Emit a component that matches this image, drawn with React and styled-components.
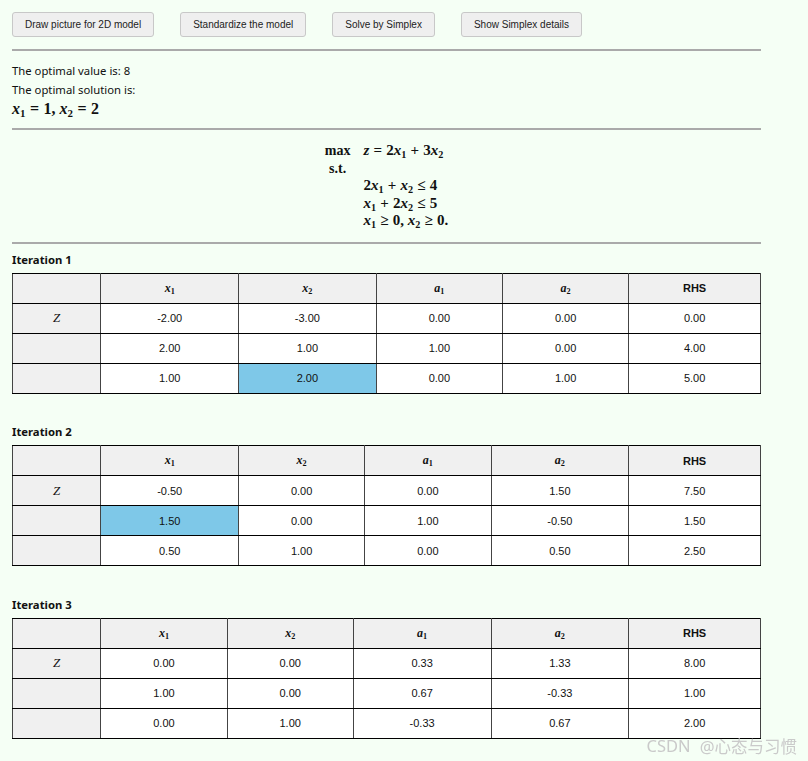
import React from 'react';
import styled, { createGlobalStyle } from 'styled-components';

const GlobalStyle = createGlobalStyle`
  html, body {
    margin: 0;
    padding: 0;
    background: #f5fff5;
  }
  body {
    font-family: "Noto Sans", "Open Sans", sans-serif;
    color: #111;
  }
`;

const Page = styled.div`
  width: 761px;
  box-sizing: border-box;
  padding: 12px 0 12px 12px;
`;

const Toolbar = styled.div`
  display: flex;
  gap: 26px;
`;

const Button = styled.button`
  height: 25px;
  padding: 0 12px;
  border: 1px solid #c8c8c8;
  border-radius: 3px;
  background: #efefef;
  color: #222;
  font-family: "Liberation Sans", Arial, sans-serif;
  font-size: 10px;
  cursor: pointer;
`;

const Rule = styled.hr`
  margin: ${(p) => p.$top ?? 11}px 0 ${(p) => p.$bottom ?? 10}px;
  border: 0;
  height: 2px;
  background: #aaaaaa;
`;

const Result = styled.div`
  font-size: 11.3px;
  line-height: 19px;
`;

const Math = styled.span`
  font-family: "Liberation Serif", "Times New Roman", serif;
  font-weight: bold;
  font-size: ${(p) => p.$size ?? 15}px;
  white-space: nowrap;
`;

const V = styled.i`
  font-style: italic;
  font-weight: bold;
`;

const Sub = styled.sub`
  font-size: 0.68em;
  line-height: 0;
  vertical-align: -0.3em;
  font-style: normal;
`;

const Op = styled.span`
  margin: 0 0.28em;
`;

const Model = styled.div`
  display: grid;
  grid-template-columns: auto auto;
  justify-content: center;
  column-gap: 13px;
  line-height: 17.5px;
`;

const ModelKey = styled.div`
  text-align: center;
  font-family: "Liberation Serif", "Times New Roman", serif;
  font-weight: bold;
  font-size: 14px;
`;

const Section = styled.section`
  margin-bottom: 31.5px;
`;

const Heading = styled.div`
  font-family: "Noto Sans", "Open Sans", sans-serif;
  font-weight: bold;
  font-size: 11.3px;
  line-height: 14px;
  margin-bottom: 6px;
`;

const Table = styled.table`
  width: 100%;
  table-layout: fixed;
  border-collapse: collapse;
  border: 1px solid #000;
  font-family: "Liberation Sans", Arial, sans-serif;
  font-size: 11px;
`;

const Cell = styled.td`
  height: 29px;
  padding: 0 8px;
  text-align: center;
  border-top: 1px solid #000;
  border-bottom: 1px solid #000;
  border-left: 1px solid #444;
  border-right: 1px solid #444;
  background: ${(p) => (p.$pivot ? '#7ec8e8' : p.$head ? '#f0f0f0' : '#ffffff')};
  font-weight: ${(p) => (p.$head ? 'bold' : 'normal')};
  color: #111;
`;

const HeadVar = styled.span`
  font-family: "Liberation Serif", "Times New Roman", serif;
  font-style: italic;
  font-weight: bold;
  font-size: 12px;
`;

const RowLabel = styled.span`
  font-family: "Liberation Serif", "Times New Roman", serif;
  font-style: italic;
  font-size: 13px;
  font-weight: normal;
`;

const Watermark = styled.div`
  position: fixed;
  right: 11px;
  bottom: 3px;
  display: flex;
  gap: 9px;
  font-family: "Noto Sans", "Noto Sans CJK SC", sans-serif;
  font-size: 16.5px;
  color: #cacaca;
  pointer-events: none;
`;

const x = (n) => (
  <>
    <V>x</V>
    <Sub>{n}</Sub>
  </>
);

const columns = [
  ['x', '1'],
  ['x', '2'],
  ['a', '1'],
  ['a', '2'],
];

const iterations = [
  {
    rows: [
      ['-2.00', '-3.00', '0.00', '0.00', '0.00'],
      ['2.00', '1.00', '1.00', '0.00', '4.00'],
      ['1.00', '2.00', '0.00', '1.00', '5.00'],
    ],
    pivot: [2, 1],
  },
  {
    rows: [
      ['-0.50', '0.00', '0.00', '1.50', '7.50'],
      ['1.50', '0.00', '1.00', '-0.50', '1.50'],
      ['0.50', '1.00', '0.00', '0.50', '2.50'],
    ],
    pivot: [1, 0],
  },
  {
    rows: [
      ['0.00', '0.00', '0.33', '1.33', '8.00'],
      ['1.00', '0.00', '0.67', '-0.33', '1.00'],
      ['0.00', '1.00', '-0.33', '0.67', '2.00'],
    ],
    pivot: null,
  },
];

// columns holding a negative number come out wider, as in an auto-sized table
const columnWidths = (rows) => {
  const weights = columns.map((_, c) => (rows.some((r) => r[c].startsWith('-')) ? 138 : 126.5));
  const all = [88.5, ...weights, 132];
  const total = all.reduce((a, b) => a + b, 0);
  return all.map((w) => `${(w / total) * 100}%`);
};

const Tableau = ({ rows, pivot }) => (
  <Table>
    <colgroup>
      {columnWidths(rows).map((w, i) => (
        <col key={i} style={{ width: w }} />
      ))}
    </colgroup>
    <tbody>
      <tr>
        <Cell $head />
        {columns.map(([name, idx]) => (
          <Cell $head key={name + idx}>
            <HeadVar>
              {name}
              <Sub>{idx}</Sub>
            </HeadVar>
          </Cell>
        ))}
        <Cell $head>RHS</Cell>
      </tr>
      {rows.map((row, r) => (
        <tr key={r}>
          <Cell $head>{r === 0 && <RowLabel>Z</RowLabel>}</Cell>
          {row.map((val, c) => (
            <Cell key={c} $pivot={pivot && pivot[0] === r && pivot[1] === c}>
              {val}
            </Cell>
          ))}
        </tr>
      ))}
    </tbody>
  </Table>
);

export default function App() {
  return (
    <Page>
      <GlobalStyle />
      <Toolbar>
        <Button>Draw picture for 2D model</Button>
        <Button>Standardize the model</Button>
        <Button>Solve by Simplex</Button>
        <Button>Show Simplex details</Button>
      </Toolbar>
      <Rule $top={12} />
      <Result>
        <div>The optimal value is: 8</div>
        <div>The optimal solution is:</div>
        <div>
          <Math $size={16}>
            {x(1)}
            <Op>=</Op>1,&nbsp;{x(2)}
            <Op>=</Op>2
          </Math>
        </div>
      </Result>
      <Rule $top={9} $bottom={12} />
      <Model>
        <ModelKey>max</ModelKey>
        <Math>
          <V>z</V>
          <Op>=</Op>2{x(1)}
          <Op>+</Op>3{x(2)}
        </Math>
        <ModelKey>s.t.</ModelKey>
        <div />
        <div />
        <Math>
          2{x(1)}
          <Op>+</Op>
          {x(2)}
          <Op>≤</Op>4
        </Math>
        <div />
        <Math>
          {x(1)}
          <Op>+</Op>2{x(2)}
          <Op>≤</Op>5
        </Math>
        <div />
        <Math>
          {x(1)}
          <Op>≥</Op>0,&nbsp;{x(2)}
          <Op>≥</Op>0.
        </Math>
      </Model>
      <Rule $top={12} $bottom={9} />
      {iterations.map((it, i) => (
        <Section key={i}>
          <Heading>Iteration {i + 1}</Heading>
          <Tableau rows={it.rows} pivot={it.pivot} />
        </Section>
      ))}
      <Watermark>
        <span>CSDN</span>
        <span>@心态与习惯</span>
      </Watermark>
    </Page>
  );
}
